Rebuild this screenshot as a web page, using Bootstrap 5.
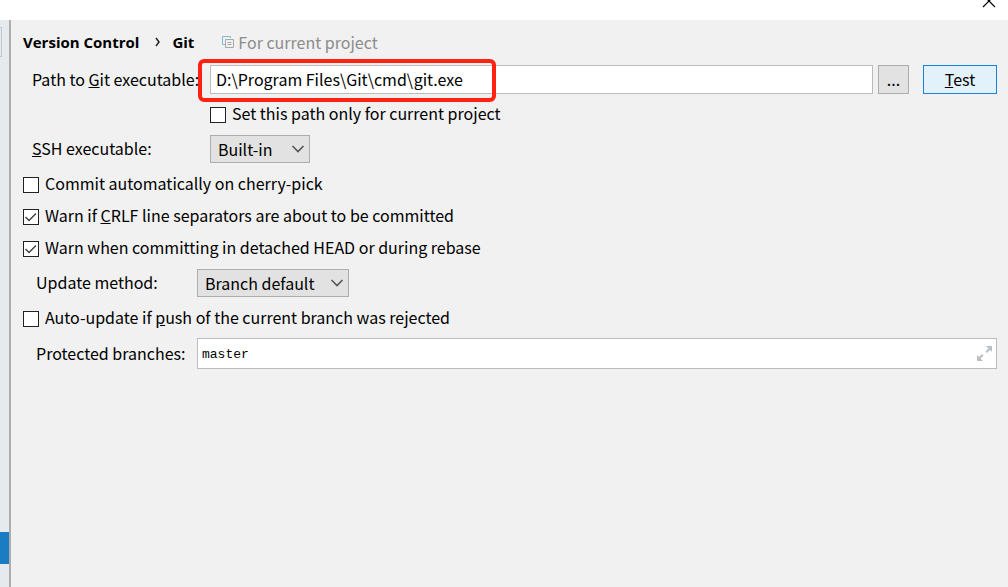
<!DOCTYPE html>
<html lang="en">
<head>
<meta charset="utf-8">
<meta name="viewport" content="width=device-width, initial-scale=1">
<title>Version Control – Git</title>
<link rel="stylesheet" href="https://cdn.jsdelivr.net/npm/bootstrap@5.3.0/dist/css/bootstrap.min.css">
<style>
  body { font-family: "Noto Sans CJK SC", "Open Sans", sans-serif; font-size: 16px; line-height: 20px; color: #000; background: #f1f1f1; }
  label { padding-bottom: 2px; }
  .titlebar { height: 20px; }
  .close-btn { width: 16px; height: 20px; margin-right: 11px; }
  .rail { width: 11px; background: #e5eaef; border-right: 2px solid #adadad; }
  .rail-search { width: 2px; height: 30px; margin-top: 7px; border: 1px solid #c4c6c8; border-left: 0; }
  .rail-selected { width: 9px; height: 32px; margin-bottom: 23px; background: #1a7dc4; }
  .settings { padding: 0 11px 20px 12px; }
  .crumbs { height: 45px; padding-bottom: 2px; }
  .crumbs b { font-family: "Open Sans", sans-serif; font-size: 15px; }
  .scope { color: #8c8c8c; }
  .field-label { width: 187px; padding-left: 9px; }
  .field-label-sub { width: 174px; padding-left: 13px; }
  .field-row { height: 28px; margin: 5px 0; }
  .check-row { height: 32px; }
  .check-indent { margin-left: 187px; }
  .box { appearance: none; width: 16px; height: 16px; margin: 1px 6px 0 0; border: 1px solid #222; background: #fff center / 14px 14px no-repeat; }
  .box:checked { background-image: url("data:image/svg+xml,%3Csvg xmlns='http://www.w3.org/2000/svg' viewBox='0 0 14 14'%3E%3Cpath d='M1.5 7l3.5 3.5L12 3.5' fill='none' stroke='%23404040' stroke-width='1.4'/%3E%3C/svg%3E"); }
  .form-control.line-input { height: 29px; padding: 0 5px 2px; font-size: 16px; line-height: 20px; color: #000; border: 1px solid #bcbcbc; border-radius: 0; }
  .form-control.branch-input { height: 31px; padding: 2px 28px 0 4px; font: 13px "Liberation Mono", monospace; color: #000; border: 1px solid #bcbcbc; border-radius: 0; }
  .form-select.combo { height: 28px; padding: 0 24px 0 7px; font-size: 16px; line-height: 20px; color: #000; border: 1px solid #adadad; border-radius: 0; background-color: #e2e2e2; background-position: right 4px center; background-size: 14px 14px;
    background-image: url("data:image/svg+xml,%3Csvg xmlns='http://www.w3.org/2000/svg' viewBox='0 0 14 14'%3E%3Cpath d='M1.5 4l5.5 5.5L12.500 4' fill='none' stroke='%23555' stroke-width='1.6'/%3E%3C/svg%3E"); }
  .combo-short { width: 100px; }
  .combo-long { width: 152px; }
  .btn.flat { height: 29px; padding: 0 0 2px; font-size: 16px; line-height: 20px; color: #000; border-radius: 0; }
  .btn.browse { width: 31px; margin-left: 5px; background: #e2e2e2; border: 1px solid #adadad; }
  .btn.test { width: 74px; margin-left: 14px; background: #e3f1fb; border: 1px solid #1883d7; }
  .highlight { left: -12px; top: -6px; width: 298px; height: 43px; border: 4px solid #ff2213; border-radius: 6px; pointer-events: none; }
  .expand-btn { right: 4px; top: 7px; width: 17px; height: 17px; }
</style>
</head>
<body>
<div class="d-flex flex-column min-vh-100">
  <header class="titlebar bg-white d-flex justify-content-end overflow-hidden">
    <button type="button" class="close-btn btn p-0 border-0 d-flex" aria-label="Close">
      <svg width="16" height="20" viewBox="0 0 16 20" fill="none" stroke="#000" stroke-width="1.2"><path d="M2 -5L14 7M2 7L14 -5"/></svg>
    </button>
  </header>
  <div class="d-flex flex-grow-1">
    <aside class="rail flex-shrink-0 d-flex flex-column justify-content-between">
      <div class="rail-search"></div>
      <div class="rail-selected"></div>
    </aside>
    <main class="settings flex-grow-1">
      <div class="crumbs d-flex align-items-center">
        <b>Version Control</b>
        <svg class="ms-3 me-2" width="5" height="10" viewBox="0 0 5 10" fill="none" stroke="#222" stroke-width="1.5"><path d="M1 1l3 4-3 4"/></svg>
        <b class="ms-1">Git</b>
        <span class="scope d-flex align-items-center ms-4 ps-1">
          <svg class="me-1" width="12" height="12" viewBox="0 0 12 12" fill="none"><path d="M3 8.500H.5V.5H8.500V2" stroke="#7fb9dc"/><path d="M3.500 3.500h8v8h-8zM5.500 6.500h4M5.500 8.500h4" stroke="#a4a8aa"/></svg>
          For current project
        </span>
      </div>

      <div class="d-flex align-items-center">
        <label class="field-label flex-shrink-0" for="git-path">Path to <u>G</u>it executable:</label>
        <div class="position-relative flex-grow-1">
          <input type="text" id="git-path" class="form-control line-input" value="D:\Program Files\Git\cmd\git.exe">
          <div class="highlight position-absolute"></div>
        </div>
        <button type="button" class="btn flat browse">...</button>
        <button type="button" class="btn flat test"><u>T</u>est</button>
      </div>

      <div class="check-row check-indent d-flex align-items-center mt-1">
        <input type="checkbox" class="box" id="only-project"><label for="only-project">Set this path only for current project</label>
      </div>

      <div class="field-row d-flex align-items-center">
        <label class="field-label" for="ssh"><u>S</u>SH executable:</label>
        <select id="ssh" class="form-select combo combo-short"><option>Built-in</option><option>Native</option></select>
      </div>

      <div class="check-row d-flex align-items-center">
        <input type="checkbox" class="box" id="cherry"><label for="cherry">Commit automatically on cherry-pick</label>
      </div>
      <div class="check-row d-flex align-items-center">
        <input type="checkbox" class="box" id="crlf" checked><label for="crlf">Warn if <u>C</u>RLF line separators are about to be committed</label>
      </div>
      <div class="check-row d-flex align-items-center">
        <input type="checkbox" class="box" id="detached" checked><label for="detached">Warn when committing in detached HEAD or during rebase</label>
      </div>

      <div class="field-row d-flex align-items-center">
        <label class="field-label-sub" for="update">Update method:</label>
        <select id="update" class="form-select combo combo-long"><option>Branch default</option><option>Merge</option><option>Rebase</option></select>
      </div>

      <div class="check-row d-flex align-items-center">
        <input type="checkbox" class="box" id="auto-update"><label for="auto-update">Auto-update if <u>p</u>ush of the current branch was rejected</label>
      </div>

      <div class="d-flex align-items-center mt-1">
        <label class="field-label-sub flex-shrink-0" for="protected">Protected branches:</label>
        <div class="position-relative flex-grow-1">
          <input type="text" id="protected" class="form-control branch-input" value="master">
          <button type="button" class="expand-btn btn p-0 border-0 position-absolute d-flex" aria-label="Expand">
            <svg width="17" height="17" viewBox="0 0 17 17" fill="#b9c0c5"><path d="M10 1h6v6l-2-2-3 3-1.500-1.500 3-3zM1 16v-6l2 2 3-3 1.500 1.500-3 3 2.500 2.500z"/></svg>
          </button>
        </div>
      </div>
    </main>
  </div>
</div>
<script src="https://cdn.jsdelivr.net/npm/bootstrap@5.3.0/dist/js/bootstrap.bundle.min.js"></script>
</body>
</html>
